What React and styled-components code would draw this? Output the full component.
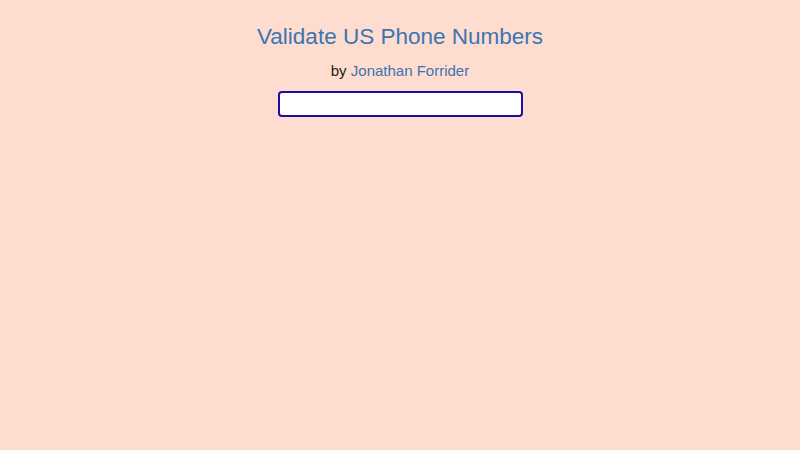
import React from 'react'
import styled, { createGlobalStyle } from 'styled-components'

const Global = createGlobalStyle`
  html, body {
    margin: 0;
    background: #fedcd0;
    font-family: "Liberation Sans", Arial, sans-serif;
    font-size: 15px;
  }
`

const Page = styled.main`
  display: flex;
  flex-direction: column;
  align-items: center;
  padding-top: 23px;
`

const Title = styled.h1`
  margin: 0;
  font-size: 22.5px;
  font-weight: 400;
  line-height: 28px;
  color: #3b76b1;
`

const Byline = styled.p`
  margin: 11px 0 0;
  font-size: 15px;
  line-height: 18px;
  color: #2a1a14;

  a {
    color: #3b76b1;
    text-decoration: none;
  }
`

const PhoneInput = styled.input`
  margin-top: 11px;
  box-sizing: border-box;
  width: 245px;
  height: 26px;
  border: 2px solid #1a0fa8;
  border-radius: 4px;
  background: #fff;
  outline: none;
  font: 14px "Liberation Sans", Arial, sans-serif;
  padding: 0 6px;
`

const App = () => {
  return (
    <Page>
      <Global />
      <Title>Validate US Phone Numbers</Title>
      <Byline>
        by <a href="#">Jonathan Forrider</a>
      </Byline>
      <PhoneInput type="text" />
    </Page>
  )
}

export default App
